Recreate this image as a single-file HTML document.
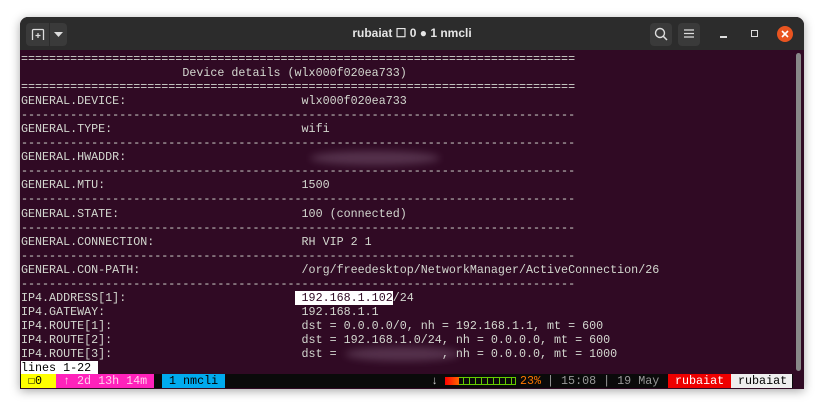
<!DOCTYPE html>
<html><head><meta charset="utf-8"><style>
body{margin:0;width:825px;height:412px;background:#fff;position:relative;overflow:hidden;font-family:"Liberation Sans",sans-serif}
.win{position:absolute;left:20px;top:17px;width:784px;height:372px;background:#300a24;border-radius:8px 8px 0 0;box-shadow:0 2px 10px rgba(0,0,0,.35);overflow:hidden}
.tb{position:absolute;left:0;top:0;width:784px;height:33px;background:#2c2c2c}
.btn{position:absolute;top:6px;height:23px;background:#3a3a3a;border-radius:4px}
.title{position:absolute;left:0;width:784px;top:9px;text-align:center;color:#e6e6e6;font-weight:bold;font-size:12px}
.t{position:absolute;left:1px;font-family:"Liberation Mono",monospace;font-size:11.7px;line-height:14.05px;color:#d3d7cf;white-space:pre}
.blur{position:absolute;background:rgba(200,170,200,.25);border-radius:50%;filter:blur(4px)}
.sb{position:absolute;top:357px;left:0;width:773px;height:14px;background:#0a0a0a;font-family:"Liberation Mono",monospace;font-size:11.7px;line-height:14px;white-space:pre}
.sb span{position:absolute;top:0;height:14px}
</style></head><body>
<div class="win">
<div class="tb">
 <div class="btn" style="left:6px;width:41px"></div>
 <div style="position:absolute;left:29px;top:6px;width:1px;height:23px;background:#2c2c2c"></div>
 <svg style="position:absolute;left:11px;top:11px" width="14" height="13" viewBox="0 0 14 13"><path d="M1.5 12V2.5a1 1 0 0 1 1-1h9a1 1 0 0 1 1 1V12" fill="none" stroke="#ddd" stroke-width="1.3"/><path d="M7 5v5M4.5 7.5h5" stroke="#ddd" stroke-width="1.2"/></svg>
 <svg style="position:absolute;left:34px;top:15px" width="9" height="5"><path d="M0 0h9L4.5 5z" fill="#ddd"/></svg>
 <div class="title">rubaiat ☐ 0 ● 1 nmcli</div>
 <div class="btn" style="left:630px;width:22px"></div>
 <svg style="position:absolute;left:634px;top:10px" width="15" height="15"><circle cx="6" cy="6" r="4.5" fill="none" stroke="#ddd" stroke-width="1.4"/><path d="M9.3 9.3L13 13" stroke="#ddd" stroke-width="1.5"/></svg>
 <div class="btn" style="left:658px;width:22px"></div>
 <svg style="position:absolute;left:664px;top:12px" width="10" height="9"><path d="M0 1h10M0 4.5h10M0 8h10" stroke="#ddd" stroke-width="1.3"/></svg>
 <div style="position:absolute;left:700px;top:19px;width:7px;height:1.5px;background:#ddd"></div>
 <div style="position:absolute;left:731px;top:13px;width:5px;height:5px;border:1.5px solid #ddd"></div>
 <div style="position:absolute;left:757px;top:9px;width:16px;height:16px;border-radius:50%;background:#e95420"></div>
 <svg style="position:absolute;left:761px;top:13px" width="8" height="8"><path d="M1 1l6 6M7 1L1 7" stroke="#fff" stroke-width="1.6"/></svg>
</div>
<div style="position:absolute;left:776px;top:36px;width:5px;height:318px;background:#888;border-radius:3px"></div>
<div class="t" style="top:35px">===============================================================================
                       Device details (wlx000f020ea733)
===============================================================================
GENERAL.DEVICE:                         wlx000f020ea733
-------------------------------------------------------------------------------
GENERAL.TYPE:                           wifi
-------------------------------------------------------------------------------
GENERAL.HWADDR:
-------------------------------------------------------------------------------
GENERAL.MTU:                            1500
-------------------------------------------------------------------------------
GENERAL.STATE:                          100 (connected)
-------------------------------------------------------------------------------
GENERAL.CONNECTION:                     RH VIP 2 1
-------------------------------------------------------------------------------
GENERAL.CON-PATH:                       /org/freedesktop/NetworkManager/ActiveConnection/26
-------------------------------------------------------------------------------
IP4.ADDRESS[1]:                         <span style="background:#fff;color:#300a24;margin-left:-7px;padding-left:7px">192.168.1.102</span>/24
IP4.GATEWAY:                            192.168.1.1
IP4.ROUTE[1]:                           dst = 0.0.0.0/0, nh = 192.168.1.1, mt = 600
IP4.ROUTE[2]:                           dst = 192.168.1.0/24, nh = 0.0.0.0, mt = 600
IP4.ROUTE[3]:                           dst =               , nh = 0.0.0.0, mt = 1000
<span style="background:#fff;color:#000">lines 1-22 </span></div>
<div class="blur" style="left:290px;top:134px;width:130px;height:14px"></div>
<div class="blur" style="left:325px;top:330px;width:115px;height:14px"></div>
<div class="sb">
 <span style="left:1px;width:35px;background:#ff0;color:#000"> ☐0</span>
 <span style="left:36px;width:98px;background:#ff22bb;color:#ffd0ee"> ↑ 2d 13h 14m</span>
 <span style="left:142px;width:63px;background:#00aaee;color:#000"> 1 nmcli</span>
 <span style="left:411px;color:#ccc">↓</span>
 <span style="left:425px;top:3px;width:71px;height:8px;border:1px solid #6c0;box-sizing:border-box;background:repeating-linear-gradient(90deg,#0a0a0a 0 5px,#6c0 5px 6px)"></span>
 <span style="left:425px;top:3px;width:14px;height:8px;background:linear-gradient(90deg,#f00,#f60)"></span>
 <span style="left:500px;color:#f70">23%</span>
 <span style="left:520px;color:#999"> | 15:08 | 19 May</span>
 <span style="left:648px;width:63px;background:#e00;color:#fff"> rubaiat</span>
 <span style="left:711px;width:61px;background:#eee;color:#000"> rubaiat</span>
</div>
</div>
</body></html>
